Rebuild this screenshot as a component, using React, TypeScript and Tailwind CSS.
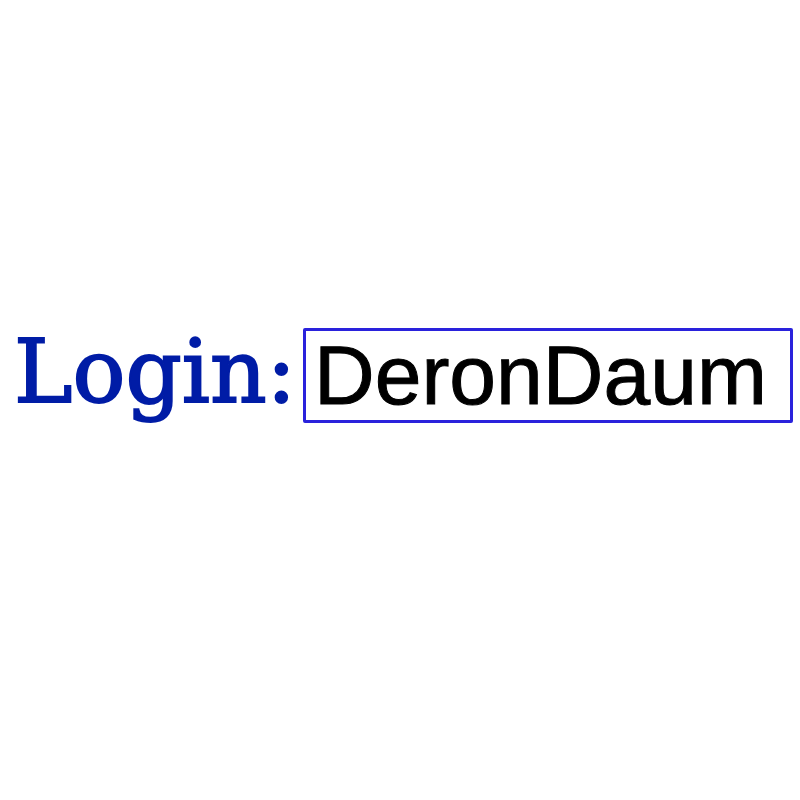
import { useState } from 'react';

export default function App() {
  const [login, setLogin] = useState('DeronDaum');

  return (
    <main className="flex min-h-screen w-full flex-col bg-white pt-[328px]">
      <form className="flex w-full items-start gap-2 pr-[7px] pl-[14px]" onSubmit={(e) => e.preventDefault()}>
        <label
          htmlFor="login"
          className="w-[281px] shrink-0 font-['DejaVu_Serif',serif] text-[88px] leading-[88px] text-[#001ca6] [-webkit-text-stroke:2px_#001ca6]"
        >
          Login:
        </label>
        <input
          id="login"
          type="text"
          value={login}
          spellCheck={false}
          autoComplete="off"
          onChange={(e) => setLogin(e.target.value)}
          className="h-[95px] min-w-0 flex-1 rounded-xs border-3 border-[#2a22dc] bg-white px-2 pb-0.5 font-['Liberation_Sans',Arial,sans-serif] text-[84px] text-black outline-none [-webkit-text-stroke:1px_black]"
        />
      </form>
    </main>
  );
}
